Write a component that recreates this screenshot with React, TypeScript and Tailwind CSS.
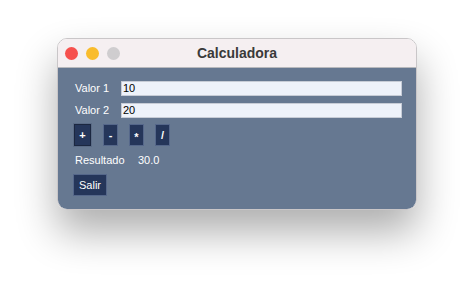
import React from "react";

export default function App() {
  const font = { fontFamily: '"Liberation Sans", Arial, sans-serif' };
  return (
    <div className="w-[474px] h-[285px] bg-white relative" style={font}>
      <div className="absolute left-[57px] top-[38px] w-[360px] rounded-[10px] overflow-hidden border border-[#c9c6c8] shadow-[0_22px_40px_rgba(0,0,0,0.32)] flex flex-col">
        <div className="h-[29px] bg-[#f5eff1] border-b border-[#b8b9bd] flex items-center relative">
          <div className="flex items-center gap-[8px] ml-[7px]">
            <div className="w-[13px] h-[13px] rounded-full bg-[#f6504d]" />
            <div className="w-[13px] h-[13px] rounded-full bg-[#f9bc2c]" />
            <div className="w-[13px] h-[13px] rounded-full bg-[#cfcdcf]" />
          </div>
          <div className="absolute inset-0 flex items-center justify-center text-[14px] font-bold text-[#3a3a3a]">
            Calculadora
          </div>
        </div>
        <div className="bg-[#667891] flex flex-col pt-[13px] pb-[13px] text-white text-[11px]">
          <div className="flex items-center h-[15px]">
            <div className="w-[63px] pl-[17px]">Valor 1</div>
            <div className="w-[281px] h-[15px] bg-[#eef2fa] border border-[#c7ccd6] text-black text-[11px] leading-[13px] pl-[1px]">10</div>
          </div>
          <div className="flex items-center h-[15px] mt-[7px]">
            <div className="w-[63px] pl-[17px]">Valor 2</div>
            <div className="w-[281px] h-[15px] bg-[#eef2fa] border border-[#c7ccd6] text-black text-[11px] leading-[13px] pl-[1px]">20</div>
          </div>
          <div className="flex items-center h-[22px] mt-[6px]">
            <div className="ml-[16px] w-[17px] h-[22px] bg-[#25365a] border border-[#1b2740] outline outline-1 outline-[#5a6b86] flex items-center justify-center font-bold text-[11px]">+</div>
            <div className="ml-[12px] w-[15px] h-[22px] bg-[#25365a] border border-[#55678a] flex items-center justify-center font-bold text-[11px]">-</div>
            <div className="ml-[11px] w-[15px] h-[22px] bg-[#25365a] border border-[#55678a] flex items-start pt-[4px] justify-center font-bold text-[11px]">*</div>
            <div className="ml-[11px] w-[15px] h-[22px] bg-[#25365a] border border-[#55678a] flex items-center justify-center font-bold text-[11px]">/</div>
          </div>
          <div className="flex items-center h-[16px] mt-[6px]">
            <div className="pl-[17px] w-[80px]">Resultado</div>
            <div>30.0</div>
          </div>
          <div className="flex mt-[6px]">
            <div className="ml-[15px] w-[34px] h-[22px] bg-[#25365a] border border-[#55678a] flex items-center justify-center text-[11px]">Salir</div>
          </div>
        </div>
      </div>
    </div>
  );
}
